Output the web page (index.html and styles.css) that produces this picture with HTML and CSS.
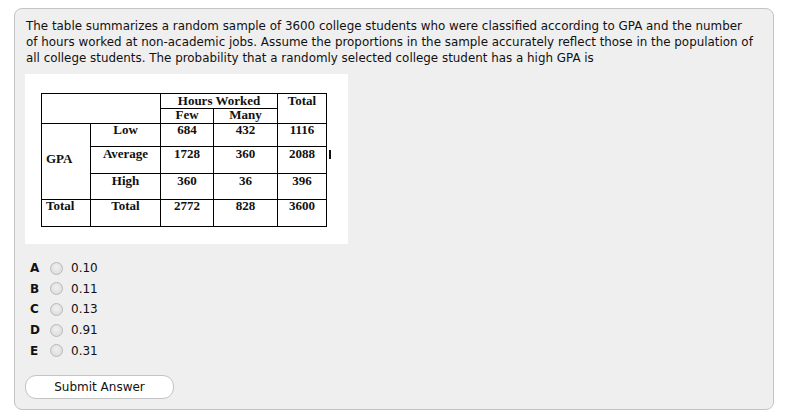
FILE: index.html
```html
<!DOCTYPE html>
<html>
<head>
<meta charset="utf-8">
<link rel="stylesheet" href="styles.css">
</head>
<body>
<div class="panel">
  <p class="question">The table summarizes a random sample of 3600 college students who were classified according to GPA and the number<br>of hours worked at non-academic jobs. Assume the proportions in the sample accurately reflect those in the population of<br>all college students. The probability that a randomly selected college student has a high GPA is</p>
  <div class="figure">
    <table class="data">
      <colgroup>
        <col class="c1"><col class="c2"><col class="c3"><col class="c4"><col class="c5">
      </colgroup>
      <tr class="r1">
        <td colspan="2" rowspan="2"></td>
        <td colspan="2" class="mid">Hours Worked</td>
        <td rowspan="2" class="mid">Total</td>
      </tr>
      <tr class="r2">
        <td class="mid">Few</td>
        <td class="mid">Many</td>
      </tr>
      <tr class="r3">
        <td rowspan="3" class="left vmid">GPA</td>
        <td class="mid">Low</td>
        <td class="mid">684</td>
        <td class="mid">432</td>
        <td class="mid">1116</td>
      </tr>
      <tr class="r4">
        <td class="mid">Average</td>
        <td class="mid">1728</td>
        <td class="mid">360</td>
        <td class="mid mark-cell">2088<span class="mark"></span></td>
      </tr>
      <tr class="r5">
        <td class="mid">High</td>
        <td class="mid">360</td>
        <td class="mid">36</td>
        <td class="mid">396</td>
      </tr>
      <tr class="r6">
        <td class="left">Total</td>
        <td class="mid">Total</td>
        <td class="mid">2772</td>
        <td class="mid">828</td>
        <td class="mid">3600</td>
      </tr>
    </table>
  </div>
  <ul class="choices">
    <li><span class="letter">A</span><span class="radio"></span><span class="val">0.10</span></li>
    <li><span class="letter">B</span><span class="radio"></span><span class="val">0.11</span></li>
    <li><span class="letter">C</span><span class="radio"></span><span class="val">0.13</span></li>
    <li><span class="letter">D</span><span class="radio"></span><span class="val">0.91</span></li>
    <li><span class="letter">E</span><span class="radio"></span><span class="val">0.31</span></li>
  </ul>
  <button class="submit">Submit Answer</button>
</div>
</body>
</html>
```
FILE: styles.css
```css
html, body {
  margin: 0;
  padding: 0;
  background: #ffffff;
}
body {
  padding: 8px 15px 0 14px;
  font-family: "DejaVu Sans", Verdana, sans-serif;
  color: #111;
}
.panel {
  box-sizing: border-box;
  width: 760px;
  height: 402px;
  background: #efefef;
  border: 1px solid #c4c4c4;
  border-radius: 8px;
  padding: 9px 10px 10px 10px;
}
.question {
  margin: 0 0 0 1px;
  font-size: 11.9px;
  line-height: 16px;
  white-space: nowrap;
}
.figure {
  margin-top: 8px;
  width: 323px;
  height: 170px;
  box-sizing: border-box;
  background: #ffffff;
  padding: 19px 0 0 16px;
  position: relative;
}
.data {
  border-collapse: collapse;
  table-layout: fixed;
  width: 286px;
  font-family: "Liberation Serif", "Times New Roman", serif;
  font-weight: bold;
  font-size: 13px;
  color: #111;
}
.data td {
  border: 1px solid #000;
  padding: 0;
  line-height: 12px;
  vertical-align: top;
}
.c1 { width: 49px; }
.c2 { width: 70px; }
.c3 { width: 53px; }
.c4 { width: 64px; }
.c5 { width: 49px; }
.r1 { height: 15px; }
.r2 { height: 15px; }
.r3 { height: 23px; }
.r4 { height: 27px; }
.r5 { height: 26px; }
.r6 { height: 27px; }
.r1 td { padding-top: 1px; }
.r3 td { padding-top: 0; }
.r4 td { padding-top: 1px; }
.r5 td { padding-top: 1px; }
.r6 td { padding-top: 0; }
.data .mid { text-align: center; }
.data .left { text-align: left; padding-left: 4px; }
.data .vmid { vertical-align: middle; padding-top: 0; padding-bottom: 6px; }
.mark-cell { position: relative; }
.mark {
  position: absolute;
  right: -5px;
  top: 3px;
  width: 2px;
  height: 9px;
  background: #111;
}
.choices {
  list-style: none;
  margin: 14px 0 0 0;
  padding: 0 0 0 5px;
}
.choices li {
  display: flex;
  align-items: center;
  height: 20.6px;
  font-size: 12px;
}
.letter {
  width: 20px;
  font-weight: bold;
}
.radio {
  box-sizing: border-box;
  width: 13px;
  height: 13px;
  border-radius: 50%;
  border: 1px solid #b9b9b9;
  background: radial-gradient(circle at 50% 40%, #f0f0f0 0%, #d8d8d8 100%);
  margin-right: 8px;
}
.val {
  color: #111;
}
.submit {
  display: block;
  margin-top: 14px;
  width: 149px;
  height: 24px;
  box-sizing: border-box;
  background: #ffffff;
  border: 1px solid #c4c4c4;
  border-radius: 11px;
  font-family: "DejaVu Sans", Verdana, sans-serif;
  font-size: 12px;
  color: #111;
  padding: 0;
}
```
